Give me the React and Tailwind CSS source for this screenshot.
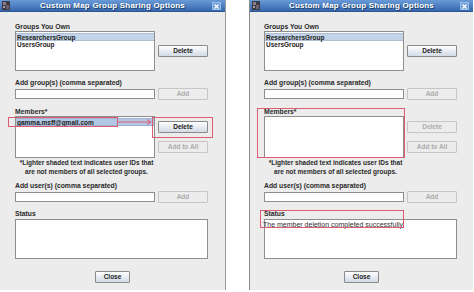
import React from "react";

function TitleBar() {
  return (
    <div className="relative flex items-center justify-center h-[12px] shrink-0 bg-linear-to-b from-[#6a9bd8] to-[#3667ad] border-b border-[#2d5792]">
      <svg className="absolute left-[2px] top-[1px]" width="8" height="9" viewBox="0 0 8 9">
        <rect x="0" y="0" width="8" height="9" fill="#3b3a46" />
        <rect x="1" y="1" width="3" height="3" fill="#8c7e88" />
        <rect x="4" y="4" width="3" height="4" fill="#6e6270" />
        <rect x="1" y="5" width="2" height="2" fill="#a59aa0" />
      </svg>
      <span className="text-[8px] leading-[12px] font-bold text-white tracking-[0.2px] [text-shadow:1px_1px_0_#1f3e6e]">
        Custom Map Group Sharing Options
      </span>
      <div className="absolute right-[4px] top-[2px] w-[9px] h-[8px] flex items-center justify-center bg-[#6f9edb] border border-[#9cc0ea]">
        <svg width="5" height="5" viewBox="0 0 5 5">
          <path d="M0.5 0.5 L4.5 4.5 M4.5 0.5 L0.5 4.5" stroke="#ffffff" strokeWidth="1.3" />
        </svg>
      </div>
    </div>
  );
}

function Btn({ children, disabled, w = "w-[50px]" }) {
  return (
    <div
      className={`${w} h-[12px] shrink-0 flex items-center justify-center rounded-[1px] border text-[6.5px] font-bold leading-none ${
        disabled
          ? "border-[#c6c6c6] bg-[#ececec] text-[#acacac]"
          : "border-[#8a8a8a] bg-linear-to-b from-[#fdfdfe] to-[#d3dbe6] text-[#222]"
      }`}
    >
      {children}
    </div>
  );
}

function Label({ children, className = "" }) {
  return (
    <div className={`h-[8px] leading-[8px] text-[6.8px] font-bold text-[#2a2a2a] ${className}`}>{children}</div>
  );
}

function Win({ right }) {
  return (
    <div
      className={`relative flex flex-col h-[290px] bg-[#ececec] ${
        right ? "w-[224px] border-l border-[#8c8c8c]" : "w-[226px] border-r border-[#9a9a9a]"
      }`}
    >
      <TitleBar />
      <div className={`flex flex-col ${right ? "pl-[14px]" : "pl-[15px]"}`}>
        <Label className="mt-[11px]">Groups You Own</Label>
        <div className="flex items-center gap-[3px]">
          <div className="w-[140px] h-[40px] bg-white border border-[#8e8e8e] pt-[1px]">
            <div className="h-[8px] leading-[8px] pl-[1px] text-[6.5px] font-bold text-[#222] bg-[#c3d4e9] border-y border-[#aebfd8]">
              ResearchersGroup
            </div>
            <div className="h-[8px] leading-[8px] pl-[1px] text-[6.5px] font-bold text-[#222]">UsersGroup</div>
          </div>
          <Btn>Delete</Btn>
        </div>

        <Label className="mt-[8px]">Add group(s) (comma separated)</Label>
        <div className="flex items-center gap-[3px] mt-[1px] h-[12px]">
          <div className="w-[140px] h-[10px] bg-white border border-[#8e8e8e]" />
          <Btn disabled>Add</Btn>
        </div>

        <Label className="mt-[8px]">Members*</Label>
        <div className="flex gap-[3px]">
          <div className="w-[140px] h-[42px] bg-white border border-[#8e8e8e] pt-[1px]">
            {!right && (
              <div className="h-[8px] leading-[8px] pl-[1px] text-[6.5px] font-bold text-[#222] bg-[#b1c7e4] border-y border-[#9db3d3]">
                gamma.msff@gmail.com
              </div>
            )}
          </div>
          <div className="flex flex-col gap-[8px] pt-[5px]">
            <Btn disabled={right}>Delete</Btn>
            <Btn disabled>Add to All</Btn>
          </div>
        </div>
        <div className="w-[143px] text-center text-[6.5px] leading-[9px] font-bold text-[#2a2a2a]">
          *Lighter shaded text indicates user IDs that
          <br />
          are not members of all selected groups.
        </div>

        <Label className="mt-[6px]">Add user(s) (comma separated)</Label>
        <div className="flex items-center gap-[3px] mt-[1px] h-[12px]">
          <div className="w-[140px] h-[10px] bg-white border border-[#8e8e8e]" />
          <Btn disabled>Add</Btn>
        </div>

        <Label className="mt-[7px]">Status</Label>
        <div className="w-[193px] h-[40px] mt-[1px] bg-white border border-[#8e8e8e]">
          {right && (
            <div className="-ml-[2px] mt-[1px] text-[7px] leading-[8px] text-[#333]">
              The member deletion completed successfully
            </div>
          )}
        </div>
      </div>
      <div className="flex justify-center mt-[12px]">
        <Btn w="w-[35px]">Close</Btn>
      </div>

      {!right && (
        <>
          <div className="absolute left-[8px] top-[117px] w-[110px] h-[10px] border border-[#dd5c72]" />
          <svg className="absolute left-[118px] top-[118px]" width="35" height="8" viewBox="0 0 35 8">
            <path d="M0 4 H32" stroke="#dd5c72" strokeWidth="1" />
            <path d="M29 1.5 L33 4 L29 6.5" stroke="#dd5c72" strokeWidth="1" fill="none" />
          </svg>
          <div className="absolute left-[152px] top-[117px] w-[61px] h-[21px] border border-[#dd5c72]" />
        </>
      )}
      {right && (
        <>
          <div className="absolute left-[7px] top-[108px] w-[148px] h-[50px] border border-[#dd5c72]" />
          <div className="absolute left-[10px] top-[210px] w-[144px] h-[18px] border border-[#dd5c72]" />
        </>
      )}
    </div>
  );
}

export default function App() {
  return (
    <div className="w-[474px] h-[292px] bg-white flex gap-[23px] overflow-hidden font-['Liberation_Sans',Arial,sans-serif]">
      <Win />
      <Win right />
    </div>
  );
}
